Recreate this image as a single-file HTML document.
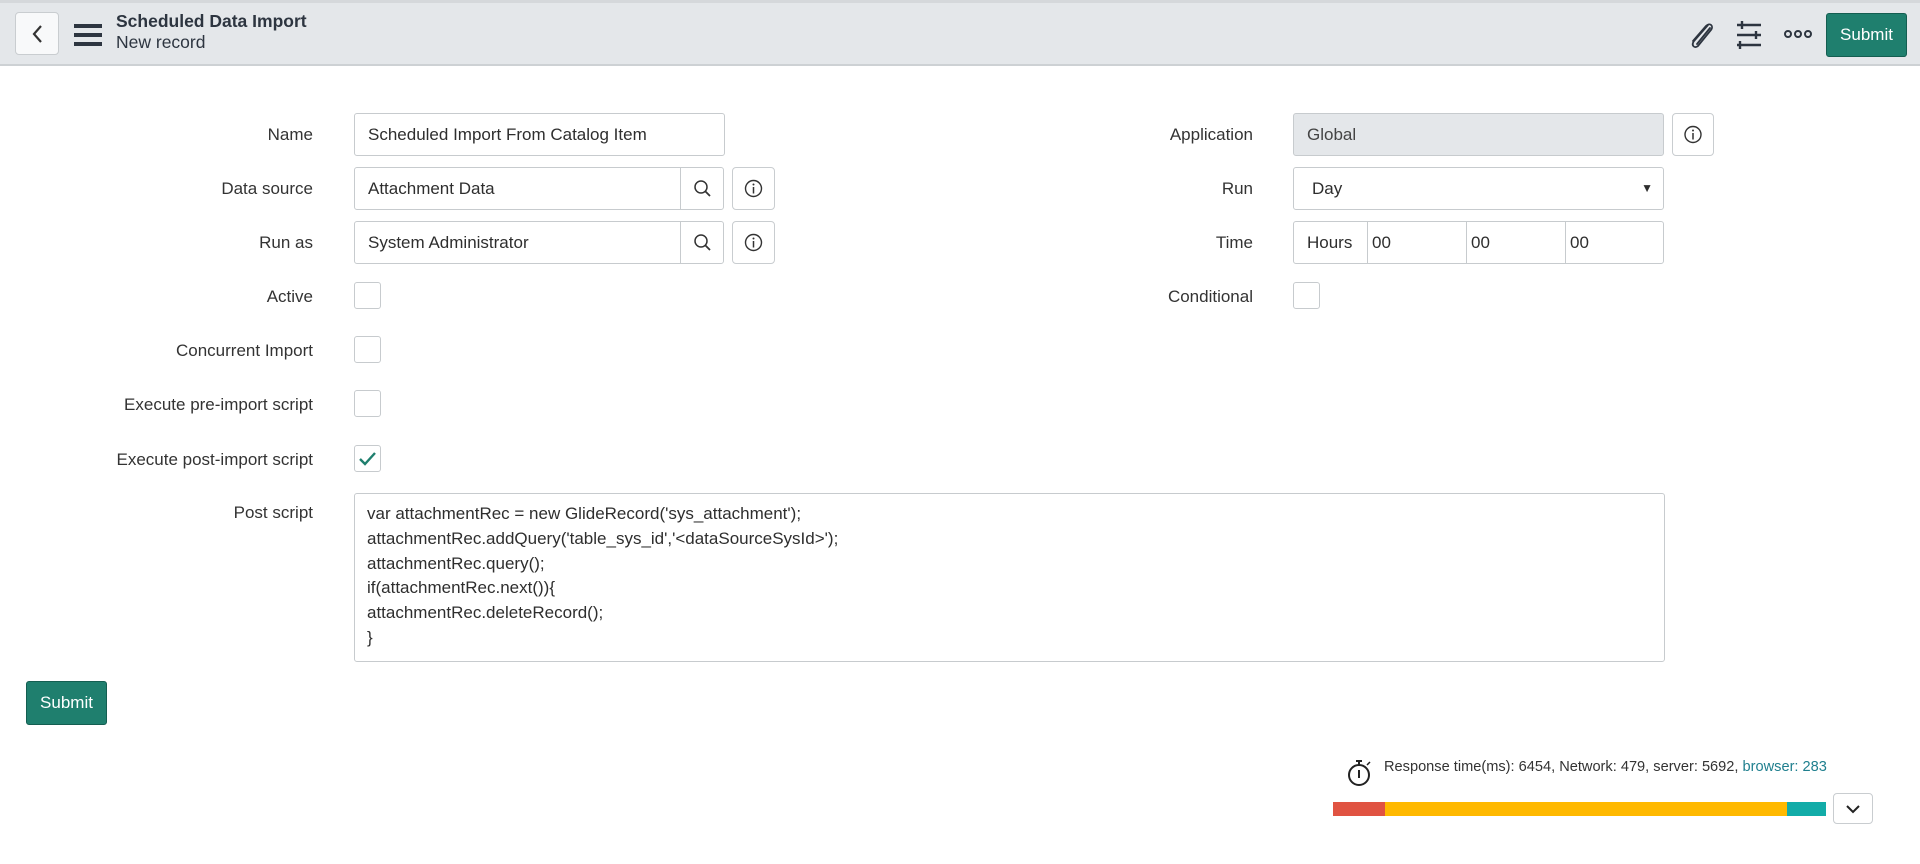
<!DOCTYPE html>
<html><head><meta charset="utf-8"><style>
*{box-sizing:border-box}
body{margin:0;width:1920px;height:864px;background:#fff;font-family:"Liberation Sans",Arial,sans-serif;color:#2e2e2e;position:relative;overflow:hidden;font-size:17px}
.hdr{position:absolute;left:0;top:0;width:1920px;height:66px;background:#e4e7ea;border-top:3px solid #d5d8db;border-bottom:2px solid #cdd1d4}
.abs{position:absolute}
.btn{position:absolute;border:1px solid #c9cdd0;border-radius:4px;background:#fff}
.lbl{position:absolute;text-align:right;width:300px;font-size:17px;color:#333}
.inp{position:absolute;border:1px solid #c7cbce;border-radius:3px;background:#fff;height:43px;font-size:17px;line-height:41px;padding-left:13px;color:#2e2e2e}
.cb{position:absolute;width:27px;height:27px;border:1px solid #c7cbce;border-radius:3px;background:#fff}
.sub{position:absolute;background:#1f7f6e;border:1px solid #145e51;border-radius:3px;color:#fff;font-size:17px;text-align:center}
</style></head><body>
<div class="hdr"></div>
<div class="btn" style="left:15px;top:12px;width:44px;height:43px;background:#f8f9fa">
<svg width="44" height="43" viewBox="0 0 44 43"><path d="M25 13 L18 21 L25 29" stroke="#333" stroke-width="2.2" fill="none"/></svg></div>
<svg class="abs" style="left:74px;top:24px" width="28" height="22"><rect y="0" width="28" height="4" fill="#2d3540"/><rect y="9" width="28" height="4" fill="#2d3540"/><rect y="18" width="28" height="4" fill="#2d3540"/></svg>
<div class="abs" style="left:116px;top:11px;font-size:17.5px;font-weight:bold;color:#2d3540">Scheduled Data Import</div>
<div class="abs" style="left:116px;top:32px;font-size:17.5px;color:#2d3540">New record</div>
<svg class="abs" style="left:1684px;top:20px" width="34" height="32" viewBox="0 0 34 32"><path d="M24 5 L10 21 C7 25 10 29 14 26 L27 10 C30 6 26 2 22 6 L9 21 M26 8 L13 24" stroke="#2d3540" stroke-width="1.8" fill="none" stroke-linecap="round"/></svg>
<svg class="abs" style="left:1734px;top:20px" width="30" height="30" viewBox="0 0 30 30"><g stroke="#2d3540" stroke-width="2.4"><line x1="3" y1="5" x2="27" y2="5"/><line x1="3" y1="15" x2="27" y2="15"/><line x1="3" y1="25" x2="27" y2="25"/><line x1="8" y1="1" x2="8" y2="9"/><line x1="22" y1="11" x2="22" y2="19"/><line x1="6" y1="21" x2="6" y2="29"/></g></svg>
<svg class="abs" style="left:1783px;top:29px" width="30" height="10" viewBox="0 0 30 10"><g stroke="#2d3540" stroke-width="2" fill="none"><circle cx="5" cy="5" r="3"/><circle cx="15" cy="5" r="3"/><circle cx="25" cy="5" r="3"/></g></svg>
<div class="sub" style="left:1826px;top:13px;width:81px;height:44px;line-height:42px">Submit</div>

<div class="lbl" style="left:13px;top:125px">Name</div>
<div class="lbl" style="left:13px;top:179px">Data source</div>
<div class="lbl" style="left:13px;top:233px">Run as</div>
<div class="lbl" style="left:13px;top:287px">Active</div>
<div class="lbl" style="left:13px;top:341px">Concurrent Import</div>
<div class="lbl" style="left:13px;top:395px">Execute pre-import script</div>
<div class="lbl" style="left:13px;top:450px">Execute post-import script</div>
<div class="lbl" style="left:13px;top:503px">Post script</div>

<div class="inp" style="left:354px;top:113px;width:371px">Scheduled Import From Catalog Item</div>
<div class="inp" style="left:354px;top:167px;width:370px">Attachment Data</div>
<div class="inp" style="left:354px;top:221px;width:370px">System Administrator</div>
<svg class="abs" style="left:680px;top:168px;border-left:1px solid #c7cbce" width="43" height="41"><circle cx="20" cy="19" r="6" stroke="#333" stroke-width="1.5" fill="none"/><line x1="24" y1="23" x2="29" y2="28" stroke="#333" stroke-width="1.8"/></svg>
<svg class="abs" style="left:680px;top:222px;border-left:1px solid #c7cbce" width="43" height="41"><circle cx="20" cy="19" r="6" stroke="#333" stroke-width="1.5" fill="none"/><line x1="24" y1="23" x2="29" y2="28" stroke="#333" stroke-width="1.8"/></svg>
<div class="btn" style="left:732px;top:167px;width:43px;height:43px"><svg width="41" height="41"><circle cx="20.5" cy="20.5" r="8" stroke="#333" stroke-width="1.4" fill="none"/><circle cx="20.5" cy="16.5" r="1" fill="#333"/><line x1="20.5" y1="19" x2="20.5" y2="25.5" stroke="#333" stroke-width="1.5"/></svg></div>
<div class="btn" style="left:732px;top:221px;width:43px;height:43px"><svg width="41" height="41"><circle cx="20.5" cy="20.5" r="8" stroke="#333" stroke-width="1.4" fill="none"/><circle cx="20.5" cy="16.5" r="1" fill="#333"/><line x1="20.5" y1="19" x2="20.5" y2="25.5" stroke="#333" stroke-width="1.5"/></svg></div>

<div class="cb" style="left:354px;top:282px"></div>
<div class="cb" style="left:354px;top:336px"></div>
<div class="cb" style="left:354px;top:390px"></div>
<div class="cb" style="left:354px;top:445px"><svg width="25" height="25"><path d="M5 13 L10 18 L20 7" stroke="#1f7f6e" stroke-width="2.4" fill="none"/></svg></div>

<div class="abs" style="left:354px;top:493px;width:1311px;height:169px;border:1px solid #c7cbce;border-radius:3px;padding:8px 12px;font-size:17px;line-height:24.8px;color:#2e2e2e">var attachmentRec = new GlideRecord('sys_attachment');<br>attachmentRec.addQuery('table_sys_id','&lt;dataSourceSysId&gt;');<br>attachmentRec.query();<br>if(attachmentRec.next()){<br>attachmentRec.deleteRecord();<br>}</div>

<div class="lbl" style="left:953px;top:125px">Application</div>
<div class="lbl" style="left:953px;top:179px">Run</div>
<div class="lbl" style="left:953px;top:233px">Time</div>
<div class="lbl" style="left:953px;top:287px">Conditional</div>
<div class="inp" style="left:1293px;top:113px;width:371px;background:#e4e7ea;color:#444">Global</div>
<div class="btn" style="left:1672px;top:113px;width:42px;height:43px"><svg width="40" height="41"><circle cx="20" cy="20.5" r="8" stroke="#333" stroke-width="1.4" fill="none"/><circle cx="20" cy="16.5" r="1" fill="#333"/><line x1="20" y1="19" x2="20" y2="25.5" stroke="#333" stroke-width="1.5"/></svg></div>
<div class="inp" style="left:1293px;top:167px;width:371px;padding-left:18px">Day<span style="position:absolute;right:10px;top:0;font-size:12px">▼</span></div>
<div class="inp" style="left:1293px;top:221px;width:371px;padding:0">
<span class="abs" style="left:13px">Hours</span>
<span class="abs" style="left:73px;top:0;height:41px;border-left:1px solid #c7cbce;padding-left:4px">00</span>
<span class="abs" style="left:172px;top:0;height:41px;border-left:1px solid #c7cbce;padding-left:4px">00</span>
<span class="abs" style="left:271px;top:0;height:41px;border-left:1px solid #c7cbce;padding-left:4px">00</span>
</div>
<div class="cb" style="left:1293px;top:282px"></div>

<div class="sub" style="left:26px;top:681px;width:81px;height:44px;line-height:42px">Submit</div>

<svg class="abs" style="left:1346px;top:758px" width="28" height="30" viewBox="0 0 28 30"><circle cx="13" cy="17" r="10" stroke="#222" stroke-width="2" fill="none"/><line x1="13" y1="3" x2="13" y2="7" stroke="#222" stroke-width="2"/><line x1="10" y1="3" x2="16" y2="3" stroke="#222" stroke-width="2"/><line x1="13" y1="12" x2="13" y2="20" stroke="#222" stroke-width="2"/><line x1="21" y1="7" x2="24" y2="4" stroke="#222" stroke-width="1.5"/></svg>
<div class="abs" style="left:1384px;top:759px;font-size:14.6px;color:#333">Response time(ms): 6454, Network: 479, server: 5692, <span style="color:#1f7f8e">browser: 283</span></div>
<div class="abs" style="left:1333px;top:802px;width:52px;height:14px;background:#e05342"></div>
<div class="abs" style="left:1385px;top:802px;width:402px;height:14px;background:#ffb900"></div>
<div class="abs" style="left:1787px;top:802px;width:39px;height:14px;background:#12aca8"></div>
<div class="btn" style="left:1833px;top:793px;width:40px;height:31px"><svg width="38" height="29"><path d="M13 12 L19 18 L25 12" stroke="#222" stroke-width="2" fill="none"/></svg></div>
</body></html>
